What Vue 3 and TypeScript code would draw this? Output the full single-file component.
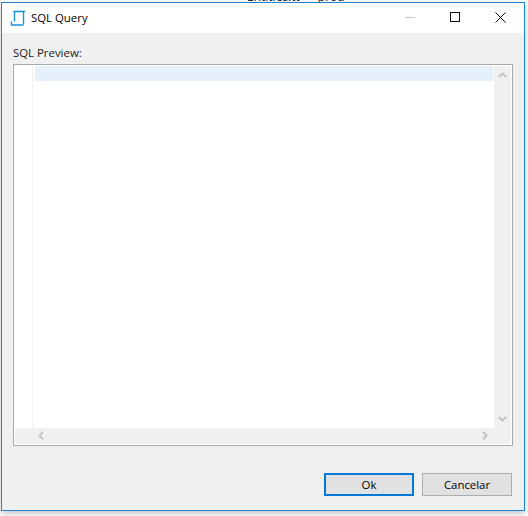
<script setup lang="ts">
const title = 'SQL Query'
</script>

<template>
  <div class="page">
    <div class="behind"><span>Entities.tt</span><span class="prod">prod</span></div>
    <div class="window">
      <header class="titlebar">
        <svg class="app-icon" width="16" height="16" viewBox="0 0 16 16" fill="none" stroke="#1c93d8">
          <path d="M3.5 1.5H15" stroke-width="1.6" />
          <path d="M4.5 1.5V11.5" stroke-width="1.4" />
          <path d="M13.5 1.5V14.5" stroke-width="1.4" />
          <path d="M1.5 11.5V15H13.5" stroke-width="1.4" />
        </svg>
        <span class="title">{{ title }}</span>
        <div class="controls">
          <span class="ctl"><svg width="10" height="10" viewBox="0 0 10 10"><path d="M0 5.5h10" stroke="#c8c8c8" /></svg></span>
          <span class="ctl mid"><svg width="10" height="10" viewBox="0 0 10 10"><rect x=".5" y=".5" width="9" height="9" fill="none" stroke="#111" /></svg></span>
          <span class="ctl"><svg width="11" height="11" viewBox="0 0 11 11"><path d="M.5.5l10 10M10.5.5l-10 10" stroke="#111" /></svg></span>
        </div>
      </header>
      <main class="body">
        <label class="label">SQL Preview:</label>
        <div class="editor">
          <div class="editor-main">
            <div class="gutter"></div>
            <div class="code"><div class="active-line"></div></div>
            <div class="vscroll">
              <svg width="9" height="6" viewBox="0 0 9 6"><path d="M.8 5L4.5 1.5 8.2 5" fill="none" stroke="#c4c4c4" stroke-width="2" /></svg>
              <svg width="9" height="6" viewBox="0 0 9 6"><path d="M.8 1L4.5 4.5 8.2 1" fill="none" stroke="#c4c4c4" stroke-width="2" /></svg>
            </div>
          </div>
          <div class="hscroll">
            <svg width="6" height="9" viewBox="0 0 6 9"><path d="M5 .8L1.5 4.5 5 8.2" fill="none" stroke="#c4c4c4" stroke-width="2" /></svg>
            <svg width="6" height="9" viewBox="0 0 6 9"><path d="M1 .8L4.5 4.5 1 8.2" fill="none" stroke="#c4c4c4" stroke-width="2" /></svg>
          </div>
        </div>
        <div class="actions">
          <button class="btn primary">Ok</button>
          <button class="btn">Cancelar</button>
        </div>
      </main>
    </div>
  </div>
</template>

<style scoped>
.page {
  width: 528px;
  height: 516px;
  box-sizing: border-box;
  padding: 0 3px 5px 1px;
  display: flex;
  flex-direction: column;
  background: #fff;
  overflow: hidden;
  font-family: "Open Sans", "Noto Sans", sans-serif;
  font-size: 11.4px;
  color: #000;
}
.behind {
  height: 2px;
  flex: none;
  overflow: hidden;
  display: flex;
  gap: 18px;
  padding-left: 246px;
  font-size: 12px;
  line-height: 2px;
  color: #222;
}
.behind span {
  transform: translateY(-4px);
}
.window {
  flex: 1;
  min-height: 0;
  display: flex;
  flex-direction: column;
  border: 1px solid #1883d7;
  box-shadow: 0 3px 7px rgba(0, 0, 0, 0.22);
  background: #f0f0f0;
}
.titlebar {
  height: 30px;
  flex: none;
  display: flex;
  align-items: center;
  background: #fff;
  padding-left: 8px;
}
.app-icon {
  flex: none;
}
.title {
  margin-left: 5px;
  margin-top: -1px;
}
.controls {
  margin-left: auto;
  margin-right: 1px;
  display: flex;
  margin-top: -2px;
}
.ctl {
  width: 46px;
  height: 30px;
  display: flex;
  align-items: center;
  justify-content: center;
}
.ctl.mid {
  width: 44px;
}
.body {
  flex: 1;
  min-height: 0;
  display: flex;
  flex-direction: column;
  padding: 11px 11px 14px 11px;
}
.label {
  line-height: 17px;
  height: 20px;
  color: #1a1a1a;
}
.editor {
  height: 382px;
  box-sizing: border-box;
  border: 1px solid #a9a9a9;
  padding: 1px;
  background: #fff;
  display: flex;
  flex-direction: column;
}
.editor-main {
  flex: 1;
  min-height: 0;
  display: flex;
}
.gutter {
  width: 17px;
  flex: none;
  border-right: 1px solid #f0f0f0;
}
.code {
  flex: 1;
  padding-left: 2px;
}
.active-line {
  height: 15px;
  background: #e6f0fb;
}
.vscroll {
  width: 17px;
  flex: none;
  background: #f0f0f0;
  margin-left: 1px;
  display: flex;
  flex-direction: column;
  justify-content: space-between;
  align-items: center;
  padding: 6px 0;
  box-sizing: border-box;
}
.hscroll {
  height: 16px;
  box-sizing: border-box;
  flex: none;
  background: #f0f0f0;
  display: flex;
  justify-content: space-between;
  align-items: center;
  padding: 0 23px 2px 23px;
}
.actions {
  margin-top: auto;
  margin-right: 1px;
  display: flex;
  justify-content: flex-end;
  gap: 8px;
}
.btn {
  width: 90px;
  height: 23px;
  box-sizing: border-box;
  border: 1px solid #adadad;
  background: #e1e1e1;
  font: inherit;
  color: #000;
  padding: 0;
}
.btn.primary {
  border: 2px solid #0078d7;
}
</style>
